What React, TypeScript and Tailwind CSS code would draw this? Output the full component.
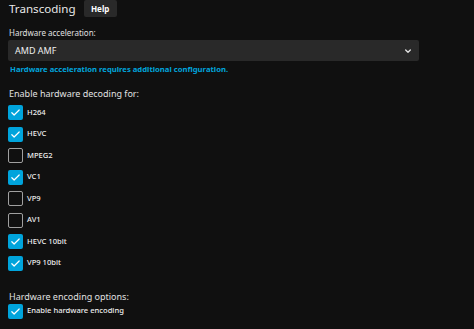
import React from "react";

const items: [string, boolean][] = [
  ["H264", true],
  ["HEVC", true],
  ["MPEG2", false],
  ["VC1", true],
  ["VP9", false],
  ["AV1", false],
  ["HEVC 10bit", true],
  ["VP9 10bit", true],
];

function Box({ checked }: { checked: boolean }) {
  return checked ? (
    <div className="w-[15px] h-[15px] rounded-[2px] bg-[#00a4dc] flex items-center justify-center shrink-0">
      <svg width="11" height="11" viewBox="0 0 24 24" fill="none" stroke="white" strokeWidth="2.6" strokeLinecap="round" strokeLinejoin="round">
        <path d="M4 12.5l5 5L20 6.5" />
      </svg>
    </div>
  ) : (
    <div className="w-[15px] h-[15px] rounded-[2px] border-[1.5px] border-[#a0a0a0] shrink-0" />
  );
}

export default function App() {
  return (
    <div className="w-[474px] h-[329px] bg-[#101010] text-[#e6e6e6] overflow-hidden relative" style={{ fontFamily: '"Noto Sans", sans-serif' }}>
      <div className="flex items-center gap-[8px] pl-[9px] h-[17px]">
        <span className="text-[11.6px] leading-[17px] text-[#e8e8e8]">Transcoding</span>
        <span className="bg-[#292929] text-white font-bold text-[8px] h-[17px] w-[33px] flex items-center justify-center rounded-[2px]">Help</span>
      </div>
      <div className="pl-[9px] mt-[10px] text-[8px] leading-[12px] text-[#e0e0e0]">Hardware acceleration:</div>
      <div className="ml-[8px] w-[411px] h-[21px] mt-[1px] bg-[#292929] rounded-[2px] flex items-center justify-between pl-[7px] pr-[7px]">
        <span className="text-[9px] text-[#eeeeee]">AMD AMF</span>
        <svg width="8" height="8" viewBox="0 0 24 24" fill="none" stroke="#e0e0e0" strokeWidth="4" strokeLinecap="round" strokeLinejoin="round">
          <path d="M5 9l7 7 7-7" />
        </svg>
      </div>
      <div className="pl-[10px] mt-[3px] text-[7.7px] leading-[11px] font-bold text-[#00a4dc]">Hardware acceleration requires additional configuration.</div>
      <div className="pl-[9px] mt-[12px] text-[9px] leading-[13px] text-[#e0e0e0]">Enable hardware decoding for:</div>
      <div className="flex flex-col gap-[6.5px] pl-[8px] mt-[5px]">
        {items.map(([label, c]) => (
          <div key={label} className="flex items-center gap-[4px] h-[15px]">
            <Box checked={c} />
            <span className="text-[7.6px] font-medium text-[#eeeeee]">{label}</span>
          </div>
        ))}
      </div>
      <div className="pl-[9px] mt-[19px] text-[9px] leading-[13px] text-[#e0e0e0]">Hardware encoding options:</div>
      <div className="flex items-center gap-[4px] h-[15px] pl-[8px] mt-[1px]">
        <Box checked={true} />
        <span className="text-[7.6px] font-medium text-[#eeeeee]">Enable hardware encoding</span>
      </div>
    </div>
  );
}
